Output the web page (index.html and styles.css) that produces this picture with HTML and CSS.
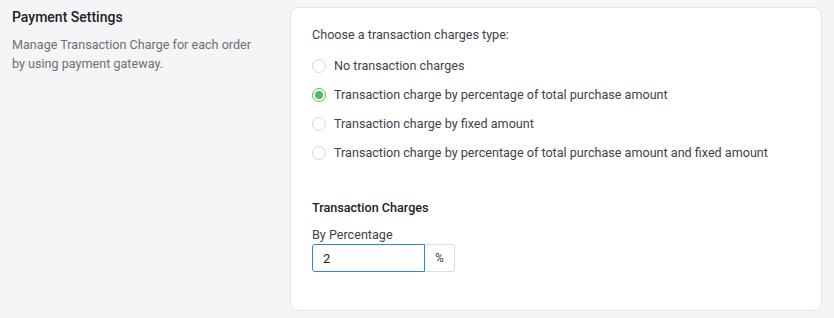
FILE: index.html
```html
<!DOCTYPE html>
<html lang="en">
  <head>
    <meta charset="UTF-8" />
    <meta name="viewport" content="width=device-width, initial-scale=1.0" />
    <title>Payment Settings</title>
    <link rel="stylesheet" href="styles.css">
  </head>
  <body>
    <div class="settings">
      <div class="settings-info">
        <h2 class="settings-title">Payment Settings</h2>
        <p class="settings-desc">Manage Transaction Charge for each order by using payment gateway.</p>
      </div>

      <div class="card">
        <p class="card-label">Choose a transaction charges type:</p>
        <div class="radio-list">
          <label class="radio">
            <input type="radio" name="chargeType" value="none" />
            <span class="radio-mark"></span>
            <span>No transaction charges</span>
          </label>
          <label class="radio">
            <input type="radio" name="chargeType" value="percentage" checked />
            <span class="radio-mark"></span>
            <span>Transaction charge by percentage of total purchase amount</span>
          </label>
          <label class="radio">
            <input type="radio" name="chargeType" value="fixed" />
            <span class="radio-mark"></span>
            <span>Transaction charge by fixed amount</span>
          </label>
          <label class="radio">
            <input type="radio" name="chargeType" value="both" />
            <span class="radio-mark"></span>
            <span>Transaction charge by percentage of total purchase amount and fixed amount</span>
          </label>
        </div>

        <h3 class="section-title">Transaction Charges</h3>
        <label class="field-label" for="percentage">By Percentage</label>
        <div class="input-group">
          <input type="text" id="percentage" class="input" value="2" />
          <span class="input-addon">%</span>
        </div>
      </div>
    </div>
  </body>
</html>
```

FILE: styles.css
```css
/* Reset */
* {
  margin: 0;
  padding: 0;
  box-sizing: border-box;
}

body {
  font-family: Roboto, "Noto Sans", sans-serif;
  font-size: 12.6px;
  line-height: 19px;
  background: #f4f5f7;
  color: #3f4347;
}

/* Layout */
.settings {
  display: flex;
  align-items: flex-start;
  padding: 0 12px 0 0;
}

.settings-info {
  width: 290px;
  flex-shrink: 0;
  padding: 8px 12px 0;
}

.settings-title {
  font-size: 14px;
  font-weight: 500;
  line-height: 19px;
  color: #1f2125;
}

.settings-desc {
  max-width: 246px;
  margin-top: 8px;
  color: #6c7075;
}

/* Card */
.card {
  flex: 1;
  margin-top: 7px;
  background: #fff;
  border: 1px solid #e4e5e8;
  border-radius: 8px;
  padding: 17px 21px 38px;
}

.card-label {
  color: #3f4347;
}

.radio-list {
  margin-top: 7px;
  display: flex;
  flex-direction: column;
}

.radio {
  display: flex;
  align-items: center;
  gap: 8px;
  height: 29px;
  cursor: pointer;
}

.radio input {
  display: none;
}

.radio-mark {
  width: 14px;
  height: 14px;
  border: 1px solid #d6d8db;
  border-radius: 50%;
  position: relative;
  flex-shrink: 0;
}

.radio input:checked + .radio-mark {
  border-color: #4cbb5d;
}

.radio input:checked + .radio-mark::after {
  content: "";
  position: absolute;
  top: 2px;
  left: 2px;
  width: 8px;
  height: 8px;
  border-radius: 50%;
  background: #4cbb5d;
}

/* Charges */
.section-title {
  margin-top: 31px;
  font-size: 12.6px;
  font-weight: 500;
  color: #1f2125;
}

.field-label {
  display: block;
  margin-top: 8px;
  color: #3f4347;
}

.input-group {
  display: flex;
  height: 28px;
}

.input {
  width: 113px;
  height: 28px;
  border: 1px solid #2b86d9;
  border-radius: 3px 0 0 3px;
  padding: 0 10px;
  font-family: inherit;
  font-size: 13px;
  color: #1f2125;
  outline: none;
}

.input-addon {
  width: 30px;
  height: 28px;
  display: flex;
  align-items: center;
  justify-content: center;
  border: 1px solid #dcdee1;
  border-left: none;
  border-radius: 0 3px 3px 0;
  font-size: 12px;
  color: #3f4347;
}
```
